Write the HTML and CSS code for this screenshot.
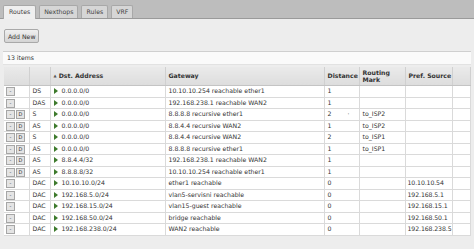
FILE: index.html
```html
<!DOCTYPE html>
<html lang="en">
<head>
    <meta charset="UTF-8">
    <title>Routes</title>
    <link rel="stylesheet" href="styles.css">
</head>
<body>
    <div class="tabbar">
        <div class="tab active">Routes</div>
        <div class="tab">Nexthops</div>
        <div class="tab">Rules</div>
        <div class="tab">VRF</div>
    </div>
    <div class="toolbar">
        <button class="btn">Add New</button>
    </div>
    <div class="items">13 items</div>
    <table class="grid">
        <colgroup>
            <col class="c-btn"><col class="c-type"><col class="c-dst"><col class="c-gw">
            <col class="c-dist"><col class="c-mark"><col class="c-src"><col class="c-end">
        </colgroup>
        <thead>
            <tr>
                <th></th>
                <th></th>
                <th><span class="sort">&#9650;</span> Dst. Address</th>
                <th>Gateway</th>
                <th>Distance</th>
                <th>Routing<br>Mark</th>
                <th>Pref. Source</th>
                <th></th>
            </tr>
        </thead>
        <tbody>
            <tr><td><span class="mini">-</span></td><td>DS</td><td><span class="arrow"></span>0.0.0.0/0</td><td>10.10.10.254 reachable ether1</td><td>1</td><td></td><td></td><td></td></tr>
            <tr><td><span class="mini">-</span></td><td>DAS</td><td><span class="arrow"></span>0.0.0.0/0</td><td>192.168.238.1 reachable WAN2</td><td>1</td><td></td><td></td><td></td></tr>
            <tr><td><span class="mini">-</span><span class="mini">D</span></td><td>S</td><td><span class="arrow"></span>0.0.0.0/0</td><td>8.8.8.8 recursive ether1</td><td>2 <span class="dot">&middot;</span></td><td>to_ISP2</td><td></td><td></td></tr>
            <tr><td><span class="mini">-</span><span class="mini">D</span></td><td>AS</td><td><span class="arrow"></span>0.0.0.0/0</td><td>8.8.4.4 recursive WAN2</td><td>1</td><td>to_ISP2</td><td></td><td></td></tr>
            <tr><td><span class="mini">-</span><span class="mini">D</span></td><td>S</td><td><span class="arrow"></span>0.0.0.0/0</td><td>8.8.4.4 recursive WAN2</td><td>2</td><td>to_ISP1</td><td></td><td></td></tr>
            <tr><td><span class="mini">-</span><span class="mini">D</span></td><td>AS</td><td><span class="arrow"></span>0.0.0.0/0</td><td>8.8.8.8 recursive ether1</td><td>1</td><td>to_ISP1</td><td></td><td></td></tr>
            <tr><td><span class="mini">-</span><span class="mini">D</span></td><td>AS</td><td><span class="arrow"></span>8.8.4.4/32</td><td>192.168.238.1 reachable WAN2</td><td>1</td><td></td><td></td><td></td></tr>
            <tr><td><span class="mini">-</span><span class="mini">D</span></td><td>AS</td><td><span class="arrow"></span>8.8.8.8/32</td><td>10.10.10.254 reachable ether1</td><td>1</td><td></td><td></td><td></td></tr>
            <tr><td><span class="mini">-</span></td><td>DAC</td><td><span class="arrow"></span>10.10.10.0/24</td><td>ether1 reachable</td><td>0</td><td></td><td>10.10.10.54</td><td></td></tr>
            <tr><td><span class="mini">-</span></td><td>DAC</td><td><span class="arrow"></span>192.168.5.0/24</td><td>vlan5-servisni reachable</td><td>0</td><td></td><td>192.168.5.1</td><td></td></tr>
            <tr><td><span class="mini">-</span></td><td>DAC</td><td><span class="arrow"></span>192.168.15.0/24</td><td>vlan15-guest reachable</td><td>0</td><td></td><td>192.168.15.1</td><td></td></tr>
            <tr><td><span class="mini">-</span></td><td>DAC</td><td><span class="arrow"></span>192.168.50.0/24</td><td>bridge reachable</td><td>0</td><td></td><td>192.168.50.1</td><td></td></tr>
            <tr><td><span class="mini">-</span></td><td>DAC</td><td><span class="arrow"></span>192.168.238.0/24</td><td>WAN2 reachable</td><td>0</td><td></td><td>192.168.238.5</td><td></td></tr>
        </tbody>
    </table>
</body>
</html>
```

FILE: styles.css
```css
body {
    margin: 0;
    background-color: #ededed;
    font-family: "DejaVu Sans", Verdana, sans-serif;
    font-size: 6.2px;
    color: #333;
}
.tabbar {
    height: 18px;
    background-color: #bdbdbd;
    border-bottom: 1px solid #9a9a9a;
    display: flex;
    align-items: flex-end;
    gap: 3px;
    padding-left: 3px;
}
.tab {
    height: 12px;
    line-height: 12px;
    padding: 0 4px;
    background-color: #d6d6d6;
    border: 1px solid #a8a8a8;
    border-bottom: none;
    border-radius: 2px 2px 0 0;
    color: #444;
}
.tab.active {
    background-color: #efefef;
    height: 13px;
    margin-bottom: -1px;
    padding: 0 5px;
}
.toolbar {
    padding: 10px 4px 8px;
}
.btn {
    font-family: inherit;
    font-size: 6.2px;
    color: #333;
    height: 14px;
    padding: 0 3px;
    background: linear-gradient(#f0f0f0, #d4d4d4);
    border: 1px solid #a9a9a9;
    border-radius: 2px;
}
.items {
    margin: 0 3px 0 3px;
    height: 12px;
    line-height: 12px;
    padding-left: 4px;
    background-color: #fafafa;
    border-top: 1px solid #cfcfcf;
    border-bottom: 1px solid #e2e2e2;
}
.grid {
    margin: 2px 3px 0 4px;
    width: 467px;
    border-collapse: collapse;
    table-layout: fixed;
    background-color: #fff;
}
.c-btn { width: 25px; }
.c-type { width: 21px; }
.c-dst { width: 115px; }
.c-gw { width: 159px; }
.c-dist { width: 35px; }
.c-mark { width: 46px; }
.c-src { width: 47px; }
.grid th {
    height: 18px;
    padding: 0 3px;
    text-align: left;
    font-weight: bold;
    line-height: 7.5px;
    background: linear-gradient(#eaeaea, #dddddd);
    border-right: 1px solid #d0d0d0;
    border-bottom: 1px solid #c4c4c4;
    color: #333;
    white-space: nowrap;
}
.grid td {
    height: 10.5px;
    padding: 0 3px;
    white-space: nowrap;
    overflow: hidden;
    border-right: 1px solid #dadada;
    border-bottom: 1px solid #dadada;
    line-height: 10px;
}
.grid td:first-child {
    padding: 0 0 0 1px;
}
.grid td:nth-child(2) {
    padding-left: 3px;
}
.grid td:nth-child(7) {
    padding: 0 0 0 2px;
    letter-spacing: -0.1px;
    overflow: visible;
}
.sort {
    font-size: 4px;
    color: #555;
    vertical-align: 1px;
}
.arrow {
    display: inline-block;
    width: 0;
    height: 0;
    border-top: 3px solid transparent;
    border-bottom: 3px solid transparent;
    border-left: 4px solid #3d7a2c;
    margin-right: 4px;
    vertical-align: -1px;
}
.mini {
    display: inline-block;
    width: 7px;
    height: 7px;
    line-height: 6px;
    margin-left: 1px;
    text-align: center;
    font-size: 5px;
    background-color: #e4e4e4;
    border: 1px solid #a6a6a6;
    vertical-align: middle;
}
.dot {
    margin-left: 14px;
}
```
